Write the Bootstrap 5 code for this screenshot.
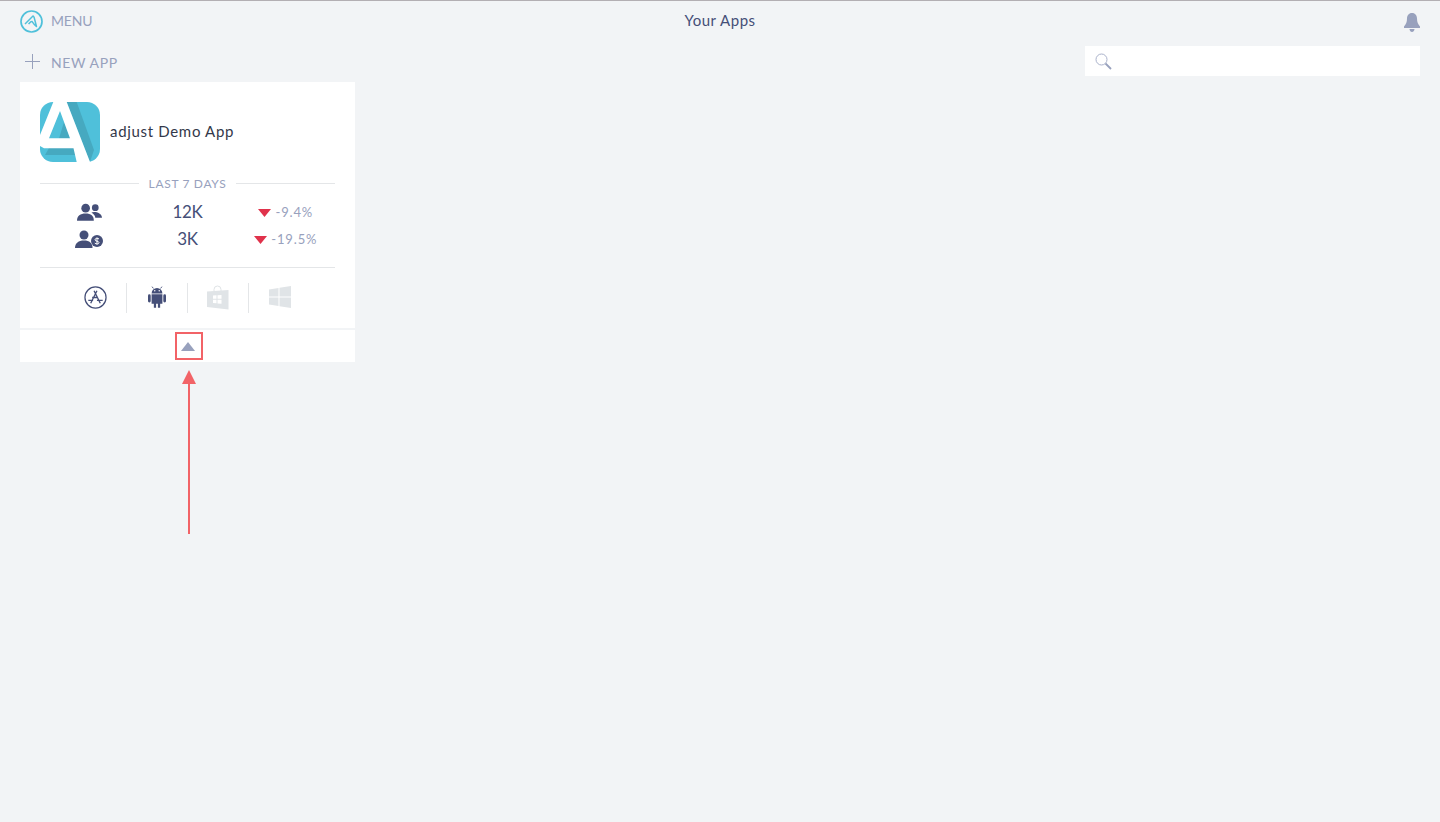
<!DOCTYPE html>
<html>
<head>
    <meta charset="UTF-8">
    <title>Your Apps</title>
    <link href="https://cdn.jsdelivr.net/npm/bootstrap@5.3.2/dist/css/bootstrap.min.css" rel="stylesheet">
    <style>
        body { background: #f2f4f6; font-family: "Lato", "Liberation Sans", sans-serif; color: #454f78; border-top: 1px solid #b3afb3; min-height: 822px; position: relative; }
        .top-bar { height: 40px; padding: 0 20px; }
        .top-side { width: 200px; }
        .muted-link { color: #98a1bd; font-size: 14px; }
        .menu-text { letter-spacing: -.2px; margin-bottom: 2px; }
        .new-text { letter-spacing: .6px; margin-top: 2px; }
        .page-title { font-size: 15px; letter-spacing: .52px; margin-bottom: 2px; }
        .bell-icon { margin-top: 4px; }
        .tool-bar { height: 30px; margin: 5px 20px 6px; }
        .new-app { padding-left: 5px; gap: 11px; }
        .search-box { width: 335px; height: 30px; background: #fff; padding-left: 10px; }
        .app-card { width: 335px; height: 280px; margin-left: 20px; background: #fff; }
        .card-main { padding: 20px 20px 0; height: 246px; }
        .app-head { height: 60px; gap: 10px; }
        .app-name { font-size: 15px; letter-spacing: .68px; color: #33384a; margin-bottom: 2px; }
        .days-label { height: 20px; margin-top: 11px; gap: 10px; font-size: 12px; letter-spacing: .66px; color: #98a1bd; }
        .days-label span { padding-top: 2px; }
        .days-label::before, .days-label::after { content: ""; flex: 1; border-top: 1px solid #e4e6e8; }
        .stat-row { height: 27px; }
        .stat-row svg.d-block { margin-top: -2px; }
        .stats-box { margin-top: 6px; border-bottom: 1px solid #e4e6e8; height: 69px; }
        .stat-value { font-size: 17px; letter-spacing: -.3px; margin-bottom: 1px; }
        .stat-change { font-size: 13px; letter-spacing: .85px; color: #98a1bd; gap: 4px; }
        .store-row { margin-top: 15px; }
        .store-cell { width: 62px; height: 30px; }
        .store-cell svg { margin-bottom: 2px; }
        .store-cell + .store-cell { border-left: 1px solid #e4e6e8; }
        .store-cell:nth-child(n+2) { margin-left: -1px; }
        .shift-2 { margin-right: 2px; }
        .shift-1 { margin-right: 1px; }
        .card-foot { height: 34px; border-top: 2px solid #f2f4f6; }
        .note-box { position: absolute; left: 175px; top: 331px; width: 28px; height: 28px; border: 2px solid #f26367; }
        .note-arrow { position: absolute; left: 181px; top: 369px; }
    </style>
</head>
<body>
    <div class="top-bar d-flex align-items-center justify-content-between">
        <div class="top-side d-flex align-items-center gap-2">
            <svg width="23" height="23" viewBox="0 0 23 23" fill="none" stroke="#4fc0da"><circle cx="11.5" cy="11.5" r="10.5" stroke-width="1.7"/><path d="M5 14 13 6c1 0 1.300 2 1.800 4l1.700 6.500c-2-1-3.500-3.500-4.500-5-1-.5-3 2-3.500 2.500" stroke-width="1.500" stroke-linejoin="round"/></svg>
            <span class="muted-link menu-text">MENU</span>
        </div>
        <div class="page-title">Your Apps</div>
        <div class="top-side d-flex justify-content-end">
            <svg class="bell-icon" width="16" height="20" viewBox="0 0 16 20" fill="#98a1bd"><path d="M8 0c3.300 0 5 2.500 5 5.500 0 3.500 1 5.500 3 8v1.500H0v-1.500c2-2.500 3-4.500 3-8C3 2.500 4.700 0 8 0z"/><path d="M5.500 16h5c0 1.500-1 3-2.500 3s-2.500-1.500-2.500-3z"/></svg>
        </div>
    </div>

    <div class="tool-bar d-flex align-items-center justify-content-between">
        <div class="new-app d-flex align-items-center">
            <svg width="15" height="15" viewBox="0 0 15 15" stroke="#98a1bd"><path d="M7.500 0v15M0 7.500h15"/></svg>
            <span class="muted-link new-text">NEW APP</span>
        </div>
        <div class="search-box d-flex align-items-center">
            <svg width="17" height="17" viewBox="0 0 17 17" fill="none" stroke="#98a1bd"><circle cx="6.500" cy="6.500" r="5.500" stroke="#aab2cb"/><path d="M10.500 10.500l5.500 5.500" stroke-width="1.800"/></svg>
        </div>
    </div>

    <div class="app-card">
        <div class="card-main">
            <div class="app-head d-flex align-items-center">
                <svg width="60" height="60" viewBox="0 0 60 60">
                    <rect width="60" height="60" rx="13" fill="#4fc0da"/>
                    <path d="M26.700 0H36.700L54 48 50 60z" fill="#46a9c0"/>
                    <path d="M20 9 30 36.500H19L24 20z" fill="#46a9c0"/>
                    <path d="M9 46H34L36 53H5z" fill="#46a9c0"/>
                    <path fill="#fff" fill-rule="evenodd" d="M13.300 0H26.700L50 60H36.700L33.500 46.300H4L0 44V33zM20 9 9 36.300H30z"/>
                </svg>
                <div class="app-name">adjust Demo App</div>
            </div>
            <div class="days-label d-flex align-items-center"><span>LAST 7 DAYS</span></div>
            <div class="stats-box">
                <div class="row g-0 stat-row align-items-center text-center">
                    <div class="col-4">
                        <svg width="25" height="18" viewBox="0 0 26 18" fill="#454f78" class="d-block mx-auto"><circle cx="9" cy="5" r="4.500"/><path d="M0 18c0-5 3.500-7.500 9-7.500s8.500 2.500 8.500 7.500z"/><circle cx="19" cy="4.500" r="3.500"/><path d="M15 9.500c3-1.500 11 0 11 5.500h-7c0-2-1.500-4-4-5.500z"/></svg>
                    </div>
                    <div class="col-4 stat-value">12K</div>
                    <div class="col-4 stat-change d-flex align-items-center justify-content-center">
                        <svg width="13" height="8" viewBox="0 0 13 8" fill="#e0324b"><path d="M0 0h13L6.500 8z"/></svg><span>-9.4%</span>
                    </div>
                </div>
                <div class="row g-0 stat-row align-items-center text-center">
                    <div class="col-4">
                        <svg width="28" height="18" viewBox="0 0 28 18" fill="#454f78" class="d-block mx-auto"><circle cx="9" cy="5" r="4.500"/><path d="M0 18c0-5 3.500-7.500 9-7.500s8.500 2.500 8.500 7.500z"/><circle cx="22" cy="11" r="6"/><path d="M24 9c-1-1-4-1-4 .8s4 1 4 2.800-3 1.600-4.200.6M22 7.500v7" fill="none" stroke="#fff" stroke-width="1"/></svg>
                    </div>
                    <div class="col-4 stat-value">3K</div>
                    <div class="col-4 stat-change d-flex align-items-center justify-content-center">
                        <svg width="13" height="8" viewBox="0 0 13 8" fill="#e0324b"><path d="M0 0h13L6.500 8z"/></svg><span>-19.5%</span>
                    </div>
                </div>
            </div>
            <div class="store-row d-flex justify-content-center">
                <div class="store-cell d-flex align-items-center justify-content-center">
                    <svg class="shift-1" width="23" height="23" viewBox="0 0 24 24" fill="none" stroke="#454f78"><circle cx="12" cy="12" r="11" stroke-width="1.300"/><path d="M13.500 5 7 18M10.500 5 17 18M4.500 15h5M13.500 15h6M8.500 12h6" stroke-width="1.400"/></svg>
                </div>
                <div class="store-cell d-flex align-items-center justify-content-center">
                    <svg class="shift-2" width="18" height="22" viewBox="0 0 20 24" fill="#454f78"><path d="M4 8a6 6 0 0 1 12 0z"/><path d="M6 2.500 4.500.5M14 2.500l1.500-2" stroke="#454f78"/><path d="M4 9h12v10.500h-2.500V24h-2.500v-4.500H9V24H6.500v-4.500H4z"/><rect y="9" width="3" height="9" rx="1.500"/><rect x="17" y="9" width="3" height="9" rx="1.500"/><circle cx="7.500" cy="5" r=".8" fill="#fff"/><circle cx="12.500" cy="5" r=".8" fill="#fff"/></svg>
                </div>
                <div class="store-cell d-flex align-items-center justify-content-center">
                    <svg class="shift-1" width="22" height="25" viewBox="0 0 22 25" fill="#e0e4e7"><path d="M7 6V4.500a3.500 3.500 0 0 1 7 0V7" fill="none" stroke="#e0e4e7"/><path d="M0 6.500 21.500 5v19.500L0 22z"/><path d="M6 10.500l3.500-.2v3.500H6zM10.500 10.200l4-.2v3.800h-4zM6 14.800h3.500v3.500L6 18zM10.500 14.800h4v4l-4-.3z" fill="#fff"/></svg>
                </div>
                <div class="store-cell d-flex align-items-center justify-content-center">
                    <svg width="22" height="22" viewBox="0 0 22 22" fill="#e0e4e7"><path d="M0 3.500 9.500 2v8.500H0zM10.500 1.800 22 0v10.500H10.500zM0 11.500h9.500V20L0 18.500zM10.500 11.500H22V22l-11.500-1.800z"/></svg>
                </div>
            </div>
        </div>
        <div class="card-foot d-flex align-items-center justify-content-center">
            <svg width="14" height="9" viewBox="0 0 14 9" fill="#98a1bd"><path d="M7 0l7 9H0z"/></svg>
        </div>
    </div>

    <div class="note-box"></div>
    <svg class="note-arrow" width="16" height="164" viewBox="0 0 16 164" fill="#f26367"><path d="M8 0l7 14H1z"/><rect x="7" y="12" width="2" height="152"/></svg>

    <script src="https://cdn.jsdelivr.net/npm/bootstrap@5.3.2/dist/js/bootstrap.bundle.min.js"></script>
</body>
</html>
